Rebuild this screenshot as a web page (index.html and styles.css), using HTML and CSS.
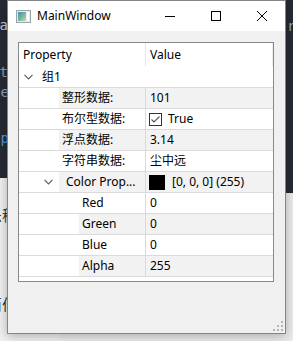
FILE: index.html
```html
<!DOCTYPE html>
<html lang="zh">
<head>
<meta charset="utf-8">
<title>MainWindow</title>
<link rel="stylesheet" href="styles.css">
</head>
<body>
<div class="desktop">
  <div class="bg-editor">
    <span class="frag f-la">la</span>
    <span class="frag f-t">st</span>
    <span class="frag f-e">ue</span>
    <span class="frag f-p">ap</span>
    <span class="frag f-r">r</span>
  </div>
  <div class="bg-doc">
    <span class="frag f-c1">乐稍</span>
    <span class="frag f-c2">佰佰</span>
  </div>

  <div class="window">
    <div class="titlebar">
      <svg class="app-icon" width="15" height="13" viewBox="0 0 15 13">
        <defs>
          <linearGradient id="ig" x1="0" y1="0" x2="1" y2="1">
            <stop offset="0" stop-color="#3f8fb0"/>
            <stop offset="0.6" stop-color="#7fbf9a"/>
            <stop offset="1" stop-color="#c8dcc0"/>
          </linearGradient>
        </defs>
        <rect x="0.5" y="0.5" width="14" height="12" fill="#e8ecef" stroke="#9aa3ab"/>
        <rect x="2" y="2" width="8" height="9" fill="url(#ig)"/>
        <rect x="11" y="2" width="2" height="9" fill="#ffffff"/>
      </svg>
      <span class="title">MainWindow</span>
      <div class="controls">
        <div class="ctl">
          <svg width="10" height="10" viewBox="0 0 10 10"><path d="M0 5.5H10" stroke="#000" stroke-width="1"/></svg>
        </div>
        <div class="ctl">
          <svg width="10" height="10" viewBox="0 0 10 10"><rect x="0.5" y="0.5" width="9" height="9" fill="none" stroke="#000" stroke-width="1"/></svg>
        </div>
        <div class="ctl">
          <svg width="10" height="10" viewBox="0 0 10 10"><path d="M0 0L10 10M10 0L0 10" stroke="#000" stroke-width="1"/></svg>
        </div>
      </div>
    </div>

    <div class="client">
      <div class="tree">
        <div class="header">
          <div class="hcell hname">Property</div>
          <div class="hcell hvalue">Value</div>
        </div>

        <div class="row group">
          <div class="branch d0"><svg class="chev" width="9" height="6" viewBox="0 0 9 6"><path d="M0.5 0.8L4.5 4.8L8.5 0.8" fill="none" stroke="#5f5f5f" stroke-width="1.2"/></svg></div>
          <div class="label">组1</div>
        </div>

        <div class="row alt">
          <div class="name"><div class="branch d1"></div><div class="label">整形数据:</div></div>
          <div class="value">101</div>
        </div>

        <div class="row">
          <div class="name"><div class="branch d1"></div><div class="label">布尔型数据:</div></div>
          <div class="value">
            <svg class="check" width="13" height="13" viewBox="0 0 13 13"><rect x="0.5" y="0.5" width="12" height="12" fill="#fff" stroke="#333"/><path d="M2.5 6.5L5 9L10.5 3.5" fill="none" stroke="#555" stroke-width="1.1"/></svg>
            <span class="vtext">True</span>
          </div>
        </div>

        <div class="row alt">
          <div class="name"><div class="branch d1"></div><div class="label">浮点数据:</div></div>
          <div class="value">3.14</div>
        </div>

        <div class="row">
          <div class="name"><div class="branch d1"></div><div class="label">字符串数据:</div></div>
          <div class="value">尘中远</div>
        </div>

        <div class="row alt">
          <div class="name">
            <div class="branch d1"><svg class="chev sub" width="9" height="6" viewBox="0 0 9 6"><path d="M0.5 0.8L4.5 4.8L8.5 0.8" fill="none" stroke="#5f5f5f" stroke-width="1.2"/></svg></div>
            <div class="label wide">Color Prop...</div>
          </div>
          <div class="value"><span class="swatch"></span><span class="vtext">[0, 0, 0] (255)</span></div>
        </div>

        <div class="row">
          <div class="name"><div class="branch d2"></div><div class="label">Red</div></div>
          <div class="value">0</div>
        </div>
        <div class="row alt">
          <div class="name"><div class="branch d2"></div><div class="label">Green</div></div>
          <div class="value">0</div>
        </div>
        <div class="row">
          <div class="name"><div class="branch d2"></div><div class="label">Blue</div></div>
          <div class="value">0</div>
        </div>
        <div class="row alt">
          <div class="name"><div class="branch d2"></div><div class="label">Alpha</div></div>
          <div class="value">255</div>
        </div>
      </div>

      <svg class="grip" width="10" height="10" viewBox="0 0 10 10" fill="#b4b4b4">
        <rect x="8" y="0" width="2" height="2"/>
        <rect x="4" y="4" width="2" height="2"/><rect x="8" y="4" width="2" height="2"/>
        <rect x="0" y="8" width="2" height="2"/><rect x="4" y="8" width="2" height="2"/><rect x="8" y="8" width="2" height="2"/>
      </svg>
    </div>
  </div>
</div>
</body>
</html>
```
FILE: styles.css
```css
html, body {
  margin: 0;
  padding: 0;
}
body {
  width: 293px;
  height: 341px;
  overflow: hidden;
  background: #ebebeb;
  font-family: "Noto Sans", "Noto Sans CJK SC", sans-serif;
  font-size: 12px;
  color: #000;
}
.desktop {
  position: relative;
  width: 293px;
  height: 341px;
  overflow: hidden;
}
.bg-editor {
  position: absolute;
  left: 0;
  top: 0;
  width: 293px;
  height: 193px;
  background: #262a33;
}
.bg-doc {
  position: absolute;
  left: 0;
  top: 178px;
  width: 60px;
  height: 163px;
  background: #f0f0f0;
}
.frag {
  position: absolute;
  font-family: "DejaVu Sans Mono", monospace;
  font-size: 14px;
  line-height: 16px;
  white-space: nowrap;
}
.f-la { left: -9px; top: 17px; color: #c9cdd3; }
.f-t  { left: -9px; top: 64px; color: #8aa0b8; }
.f-e  { left: -8px; top: 84px; color: #8aa0b8; }
.f-p  { left: -8px; top: 130px; color: #4f94d4; }
.f-r  { left: 287px; top: 18px; color: #9aa6b2; }
.f-c1 { left: -13px; top: 29px; color: #333; font-family: "Noto Sans CJK SC", sans-serif; font-size: 15px; }
.f-c2 { left: -13px; top: 118px; color: #333; font-family: "Noto Sans CJK SC", sans-serif; font-size: 15px; }

.window {
  position: absolute;
  left: 7px;
  top: 0;
  width: 277px;
  height: 332px;
  border: 1px solid #858585;
  background: #f0f0f0;
  box-shadow: 0 2px 10px rgba(0, 0, 0, 0.28);
  display: flex;
  flex-direction: column;
}
.titlebar {
  height: 30px;
  background: #fff;
  display: flex;
  align-items: center;
  flex: none;
}
.app-icon {
  margin-left: 8px;
  margin-top: 1px;
  flex: none;
}
.title {
  margin-left: 6px;
  font-family: "Noto Sans", sans-serif;
  font-size: 12px;
  flex: 1;
  position: relative;
  top: -1px;
}
.controls {
  display: flex;
  height: 30px;
}
.ctl {
  width: 46px;
  height: 30px;
  display: flex;
  align-items: center;
  justify-content: center;
}
.ctl svg { display: block; }

.client {
  flex: 1;
  position: relative;
  padding: 11px 11px 0 10px;
}
.tree {
  width: 254px;
  height: 238px;
  border: 1px solid #868a8f;
  background: #fff;
  overflow: hidden;
}
.header {
  display: flex;
  height: 24px;
  background: #fff;
}
.hcell {
  display: flex;
  align-items: center;
  padding-left: 4px;
  box-sizing: border-box;
  position: relative;
  top: -1px;
}
.hname {
  width: 127px;
  border-right: 1px solid #e6e6e6;
  margin-top: 1px;
}
.hvalue {
  width: 127px;
  border-right: 1px solid #eeeeee;
  margin-top: 1px;
}

.row {
  display: flex;
  height: 20px;
  border-bottom: 1px solid #dadada;
  line-height: 20px;
}
.name {
  width: 126px;
  display: flex;
  flex: none;
}
.branch {
  background: #fff;
  flex: none;
  display: flex;
  align-items: center;
  justify-content: flex-end;
}
.branch.d0 { width: 20px; }
.branch.d1 { width: 40px; }
.branch.d2 { width: 60px; }
.chev { display: block; margin-right: 6px; }
.chev.sub { margin-right: 6px; }
.label {
  flex: 1;
  padding-left: 3px;
  white-space: nowrap;
  overflow: hidden;
}
.label.wide { padding-left: 7px; }
.value {
  flex: 1;
  border-left: 1px solid #dadada;
  padding-left: 4px;
  display: flex;
  align-items: center;
  white-space: nowrap;
}
.row.alt .label,
.row.alt .value {
  background: #f2f2f2;
}
.check { display: block; margin-left: -1px; flex: none; }
.check + .vtext { margin-left: 6px; }
.swatch {
  width: 16px;
  height: 15px;
  background: #000;
  margin-left: -1px;
  flex: none;
}
.swatch + .vtext { margin-left: 7px; }

.grip {
  position: absolute;
  right: 2px;
  bottom: 2px;
  display: block;
}
```
